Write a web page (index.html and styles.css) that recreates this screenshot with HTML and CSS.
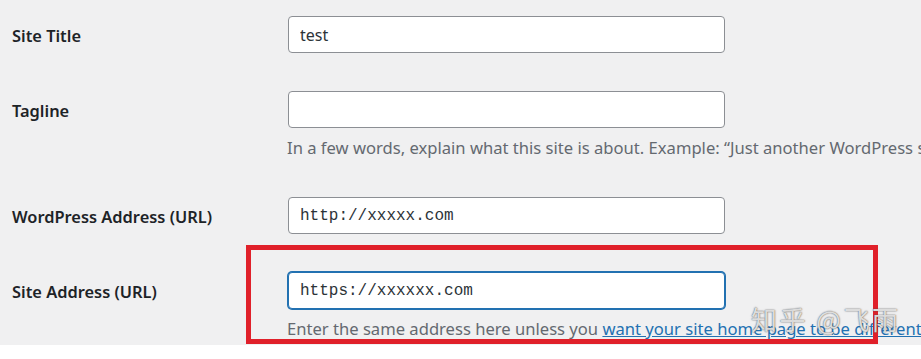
FILE: index.html
```html
<!DOCTYPE html>
<html lang="en">
<head>
    <meta charset="UTF-8">
    <meta name="viewport" content="width=device-width, initial-scale=1.0">
    <title>General Settings</title>
    <link rel="stylesheet" href="styles.css">
</head>
<body>
    <div class="settings">
        <div class="form-row">
            <label class="row-label" for="blogname">Site Title</label>
            <div class="row-field">
                <input type="text" id="blogname" class="regular-text" value="test">
            </div>
        </div>

        <div class="form-row">
            <label class="row-label" for="blogdescription">Tagline</label>
            <div class="row-field">
                <input type="text" id="blogdescription" class="regular-text" value="">
                <p class="description">In a few words, explain what this site is about. Example: “Just another WordPress site.”</p>
            </div>
        </div>

        <div class="form-row">
            <label class="row-label" for="siteurl">WordPress Address (URL)</label>
            <div class="row-field">
                <input type="url" id="siteurl" class="regular-text code" value="http://xxxxx.com">
            </div>
        </div>

        <div class="form-row">
            <label class="row-label" for="home">Site Address (URL)</label>
            <div class="row-field">
                <input type="url" id="home" class="regular-text code is-focused" value="https://xxxxxx.com">
                <p class="description">Enter the same address here unless you <a href="#">want your site home page to be different from your WordPress installation address</a>.</p>
            </div>
        </div>

        <!-- annotation over the last row -->
        <div class="highlight-box"></div>
        <div class="watermark">知乎 @飞雨</div>
    </div>
</body>
</html>
```

FILE: styles.css
```css
body {
    margin: 0;
    background: #fff;
    font-family: "Noto Sans", "Open Sans", Arial, sans-serif;
    overflow: hidden;
}

.settings {
    position: relative;
    height: 329px;
    padding-top: 16px;
    background: #f0f0f1;
    color: #1d2327;
    overflow: hidden;
}

.form-row {
    display: grid;
    grid-template-columns: 288px 1fr;
    margin-bottom: 38px;
}

.row-label {
    padding-left: 12px;
    height: 37px;
    line-height: 39px;
    font-size: 16.4px;
    font-weight: 600;
    color: #1d2327;
}

.row-field {
    min-width: 0;
}

.regular-text {
    display: block;
    box-sizing: border-box;
    width: 437px;
    height: 37px;
    margin: 0;
    padding: 0 11px;
    border: 1px solid #8c8f94;
    border-radius: 4px;
    background: #fff;
    font-family: "Noto Sans", "Open Sans", Arial, sans-serif;
    font-size: 16px;
    color: #2c3338;
    outline: none;
}

.code {
    font-family: "Liberation Mono", "DejaVu Sans Mono", monospace;
    font-size: 16px;
}

.is-focused {
    border-color: #2271b1;
    box-shadow: 0 0 0 1px #2271b1;
}

.description {
    margin: 9px 0 0 -1px;
    font-size: 16.6px;
    line-height: 22px;
    color: #646970;
    white-space: nowrap;
}

.description a {
    color: #2271b1;
}

.highlight-box {
    position: absolute;
    left: 246px;
    top: 245px;
    width: 622px;
    height: 89px;
    border: 5px solid #e0202a;
}

.watermark {
    position: absolute;
    left: 751px;
    top: 300px;
    font-family: "Noto Sans CJK SC", sans-serif;
    font-size: 26px;
    letter-spacing: 2.5px;
    color: rgba(255, 255, 255, 0.8);
    text-shadow: 0 0 1px rgba(80, 80, 80, 0.9), 0 0 2px rgba(80, 80, 80, 0.6);
}
```
